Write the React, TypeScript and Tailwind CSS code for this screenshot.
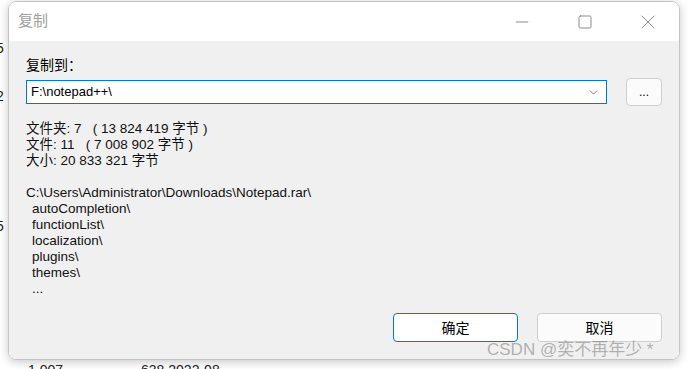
import { Minus, Square, X, ChevronDown } from "lucide-react";

const stats = ["文件夹: 7   ( 13 824 419 字节 )", "文件: 11   ( 7 008 902 字节 )", "大小: 20 833 321 字节"];
const folders = ["autoCompletion\\", "functionList\\", "localization\\", "plugins\\", "themes\\", "..."];

const uiFont = { fontFamily: '"Liberation Sans", "Noto Sans CJK SC", sans-serif' };
const cjkFont = { fontFamily: '"Noto Sans CJK SC", sans-serif' };

export default function App() {
  return (
    <div className="relative h-[369px] w-[690px] overflow-hidden bg-white text-black" style={uiFont}>
      {/* the window underneath, peeking out */}
      <div className="absolute left-[-4px] top-[40px] flex flex-col gap-[32px] text-[14px] leading-[16px] text-[#222]">
        <span>5</span>
        <span>2</span>
        <span className="mt-[82px]">5</span>
      </div>
      <div className="absolute left-[28px] top-[362px] flex gap-[78px] text-[14px] leading-[16px] text-[#222]">
        <span>1 007</span>
        <span>638   2022-08</span>
      </div>

      {/* dialog window */}
      <div className="absolute left-[8px] top-[1px] flex h-[359px] w-[672px] flex-col overflow-hidden rounded-[8px] border border-[#c4c4c4] shadow-[0_2px_10px_rgba(0,0,0,0.22)]">
        <div className="flex h-[39px] shrink-0 items-center bg-white">
          <span className="ml-[9px] text-[15px] text-[#a0a0a0]">复制</span>
          <div className="ml-auto flex items-center text-[#8a8a8a]">
            <div className="flex w-[63px] justify-center">
              <Minus size={20} strokeWidth={1.2} />
            </div>
            <div className="flex w-[63px] justify-center">
              <Square size={16} strokeWidth={1.5} />
            </div>
            <div className="flex w-[63px] justify-center">
              <X size={24} strokeWidth={1} />
            </div>
          </div>
        </div>

        <div className="flex flex-1 flex-col bg-[#f0f0f0] px-[17px] pt-[13px] pb-[17px]">
          <div className="text-[14px] leading-[20px]" style={cjkFont}>
            复制到：
          </div>
          <div className="mt-[4px] flex items-center gap-[19px]">
            <div className="flex h-[24px] flex-1 items-center border border-[#0078d7] bg-white pl-[4px] pr-[6px]">
              <span className="text-[13px]">F:\notepad++\</span>
              <ChevronDown className="ml-auto text-[#555]" size={13} strokeWidth={1.3} />
            </div>
            <button className="flex h-[28px] w-[36px] items-center justify-center rounded-[4px] border border-[#cfcfcf] bg-[#fbfbfb] text-[12px] leading-none">
              ...
            </button>
          </div>

          <div className="mt-[15px] text-[13.5px] leading-[16px] text-[#111]">
            {stats.map((line) => (
              <div key={line} className="whitespace-pre">
                {line}
              </div>
            ))}
            <div className="mt-[16px]">C:\Users\Administrator\Downloads\Notepad.rar\</div>
            {folders.map((f) => (
              <div key={f} className="pl-[6px]">
                {f}
              </div>
            ))}
          </div>

          <div className="mt-auto flex justify-end gap-[19px]">
            <button className="h-[29px] w-[125px] rounded-[4px] border border-[#0078d7] bg-white text-[14px]" style={cjkFont}>
              确定
            </button>
            <button className="h-[29px] w-[125px] rounded-[4px] border border-[#cfcfcf] bg-[#fbfbfb] text-[14px]" style={cjkFont}>
              取消
            </button>
          </div>
        </div>
      </div>

      {/* watermark */}
      <div className="absolute left-[487px] top-[339px] text-[17px] leading-[22px] text-[rgba(120,120,120,0.55)]">
        CSDN @奕不再年少 *
      </div>
    </div>
  );
}
